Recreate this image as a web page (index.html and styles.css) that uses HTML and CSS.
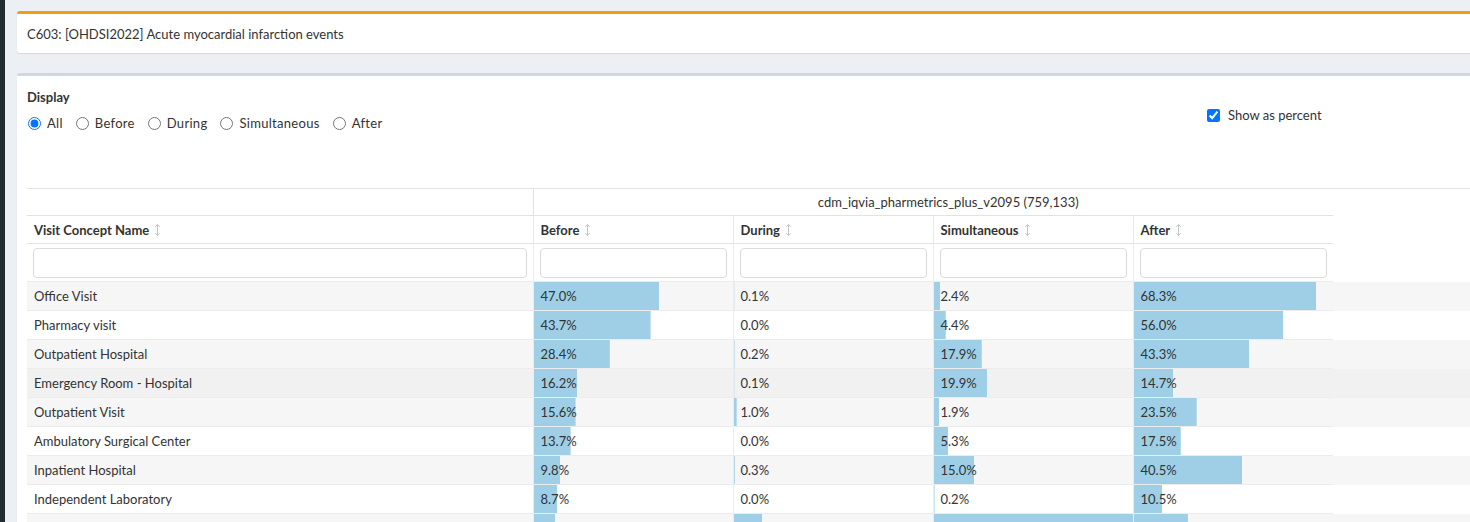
FILE: index.html
```html
<!DOCTYPE html>
<html lang="en">
<head>
<meta charset="utf-8">
<title>C603</title>
<link rel="stylesheet" href="styles.css">
</head>
<body>
<div class="layout">
  <aside class="sidebar"></aside>
  <main class="content">
    <section class="card card-title">C603: [OHDSI2022] Acute myocardial infarction events</section>
    <section class="card card-main">
      <div class="controls">
        <div class="display">
          <div class="label">Display</div>
          <div class="radios">
            <label class="opt"><input type="radio" name="display" checked><span>All</span></label>
            <label class="opt"><input type="radio" name="display"><span>Before</span></label>
            <label class="opt"><input type="radio" name="display"><span>During</span></label>
            <label class="opt"><input type="radio" name="display"><span>Simultaneous</span></label>
            <label class="opt"><input type="radio" name="display"><span>After</span></label>
          </div>
        </div>
        <div class="percent">
          <label class="opt"><input type="checkbox" checked><span>Show as percent</span></label>
        </div>
      </div>

      <table class="grid">
        <colgroup>
          <col class="c-name"><col class="c-val"><col class="c-val"><col class="c-val"><col class="c-val"><col class="c-fill">
        </colgroup>
        <thead>
          <tr class="h-group">
            <th></th>
            <th colspan="4" class="group">cdm_iqvia_pharmetrics_plus_v2095 (759,133)</th>
            <th class="fill"></th>
          </tr>
          <tr class="h-cols">
            <th>Visit Concept Name<svg class="sort" viewBox="0 0 7 14" width="7" height="14"><path d="M3.5 1.5V12.5M1.2 4L3.5 1.5L5.8 4M1.2 10L3.5 12.5L5.8 10"/></svg></th>
            <th>Before<svg class="sort" viewBox="0 0 7 14" width="7" height="14"><path d="M3.5 1.5V12.5M1.2 4L3.5 1.5L5.8 4M1.2 10L3.5 12.5L5.8 10"/></svg></th>
            <th>During<svg class="sort" viewBox="0 0 7 14" width="7" height="14"><path d="M3.5 1.5V12.5M1.2 4L3.5 1.5L5.8 4M1.2 10L3.5 12.5L5.8 10"/></svg></th>
            <th>Simultaneous<svg class="sort" viewBox="0 0 7 14" width="7" height="14"><path d="M3.5 1.5V12.5M1.2 4L3.5 1.5L5.8 4M1.2 10L3.5 12.5L5.8 10"/></svg></th>
            <th>After<svg class="sort" viewBox="0 0 7 14" width="7" height="14"><path d="M3.5 1.5V12.5M1.2 4L3.5 1.5L5.8 4M1.2 10L3.5 12.5L5.8 10"/></svg></th>
            <th class="fill"></th>
          </tr>
          <tr class="h-filter">
            <td><input type="text" class="filter"></td>
            <td><input type="text" class="filter"></td>
            <td><input type="text" class="filter"></td>
            <td><input type="text" class="filter"></td>
            <td><input type="text" class="filter"></td>
            <td class="fill"></td>
          </tr>
        </thead>
        <tbody>
          <tr class="odd"><td>Office Visit</td><td class="bar" style="--w:63.0%">47.0%</td><td class="bar" style="--w:0.13%">0.1%</td><td class="bar" style="--w:3.2%">2.4%</td><td class="bar" style="--w:91.6%">68.3%</td><td class="fill"></td></tr>
          <tr><td>Pharmacy visit</td><td class="bar" style="--w:58.6%">43.7%</td><td class="bar" style="--w:0%">0.0%</td><td class="bar" style="--w:5.9%">4.4%</td><td class="bar" style="--w:75.1%">56.0%</td><td class="fill"></td></tr>
          <tr class="odd"><td>Outpatient Hospital</td><td class="bar" style="--w:38.1%">28.4%</td><td class="bar" style="--w:0.27%">0.2%</td><td class="bar" style="--w:24.0%">17.9%</td><td class="bar" style="--w:58.0%">43.3%</td><td class="fill"></td></tr>
          <tr class="hover"><td>Emergency Room - Hospital</td><td class="bar" style="--w:21.7%">16.2%</td><td class="bar" style="--w:0.13%">0.1%</td><td class="bar" style="--w:26.7%">19.9%</td><td class="bar" style="--w:19.7%">14.7%</td><td class="fill"></td></tr>
          <tr class="odd"><td>Outpatient Visit</td><td class="bar" style="--w:20.9%">15.6%</td><td class="bar" style="--w:1.34%">1.0%</td><td class="bar" style="--w:2.5%">1.9%</td><td class="bar" style="--w:31.5%">23.5%</td><td class="fill"></td></tr>
          <tr><td>Ambulatory Surgical Center</td><td class="bar" style="--w:18.4%">13.7%</td><td class="bar" style="--w:0%">0.0%</td><td class="bar" style="--w:7.1%">5.3%</td><td class="bar" style="--w:23.5%">17.5%</td><td class="fill"></td></tr>
          <tr class="odd"><td>Inpatient Hospital</td><td class="bar" style="--w:13.1%">9.8%</td><td class="bar" style="--w:0.4%">0.3%</td><td class="bar" style="--w:20.1%">15.0%</td><td class="bar" style="--w:54.3%">40.5%</td><td class="fill"></td></tr>
          <tr><td>Independent Laboratory</td><td class="bar" style="--w:11.7%">8.7%</td><td class="bar" style="--w:0%">0.0%</td><td class="bar" style="--w:0.27%">0.2%</td><td class="bar" style="--w:14.1%">10.5%</td><td class="fill"></td></tr>
          <tr class="odd"><td></td><td class="bar" style="--w:10.6%"></td><td class="bar" style="--w:14.1%"></td><td class="bar" style="--w:100%"></td><td class="bar" style="--w:27.1%"></td><td class="fill"></td></tr>
        </tbody>
      </table>
    </section>
  </main>
</div>
</body>
</html>
```

FILE: styles.css
```css
html, body {
  margin: 0;
  padding: 0;
}

body {
  background: #ecf0f5;
  color: #333;
  font-family: "Lato", "Liberation Sans", sans-serif;
  font-size: 13px;
  overflow: hidden;
  height: 522px;
}

.layout {
  display: flex;
  min-height: 522px;
}

.sidebar {
  flex: none;
  width: 5px;
  background: #222d32;
}

.content {
  flex: none;
  width: 1500px;
  padding: 11px 0 0 12px;
}

.card {
  background: #fff;
  border-radius: 3px;
  box-shadow: 0 1px 1px rgba(0, 0, 0, 0.1);
}

.card-title {
  border-top: 3px solid #f39c12;
  display: flex;
  align-items: center;
  padding-left: 10px;
  box-sizing: border-box;
  height: 42px;
}

.card-main {
  margin-top: 20px;
  border-top: 3px solid #d2d6de;
  padding: 11px 10px 0 10px;
  min-height: 460px;
}

.controls {
  display: flex;
}

.display {
  width: 1179px;
  flex: none;
}

.label {
  font-weight: 700;
  line-height: 20px;
}

.radios {
  display: flex;
  margin-top: 7px;
  height: 18px;
  align-items: center;
  letter-spacing: 0.3px;
}

.opt {
  display: inline-flex;
  align-items: center;
  margin-right: 12px;
  line-height: 18px;
}

.opt input {
  margin: 0 6px 0 1px;
  width: 13px;
  height: 13px;
  accent-color: #0075ff;
}

.percent {
  padding-top: 19px;
}

.percent .opt input {
  margin-right: 8px;
}

.grid {
  margin-top: 56px;
  border-collapse: collapse;
  table-layout: fixed;
  width: 1460px;
  border-top: 1px solid #e2e2e2;
}

.c-name { width: 506px; }
.c-val { width: 200px; }

.grid th,
.grid td {
  padding: 0 6px 0 7px;
  text-align: left;
  white-space: nowrap;
  overflow: hidden;
}

.grid th {
  font-weight: 700;
}

.h-group th {
  height: 26px;
  border-bottom: 1px solid #e2e2e2;
}

.h-group th.group {
  text-align: center;
  font-weight: 400;
  padding-left: 36px;
  border-left: 1px solid #e2e2e2;
}

.h-cols th {
  height: 27px;
  border-bottom: 1px solid #e2e2e2;
}

.h-cols th + th {
  border-left: 1px solid #e8e8e8;
}

.sort {
  margin-left: 5px;
  vertical-align: -2px;
  fill: none;
  stroke: #c4c4c4;
  stroke-width: 1;
}

.h-filter td {
  height: 37px;
  padding: 0 6px;
  border-bottom: 1px solid #ececec;
}

.h-filter td + td {
  border-left: 1px solid #ececec;
}

.filter {
  display: block;
  box-sizing: border-box;
  width: 100%;
  height: 30px;
  border: 1px solid #dcdcdc;
  border-radius: 4px;
  background: #fff;
  margin: 0;
}

.grid th.fill,
.grid td.fill {
  border-left: none;
  border-bottom: none;
}

tbody tr td {
  height: 28px;
  border-bottom: 1px solid #ececec;
}

tbody tr td + td {
  border-left: 1px solid #ececec;
}

tbody tr.odd {
  background: #f6f6f6;
}

tbody tr.hover {
  background: #f1f1f1;
}

.bar {
  background-image: linear-gradient(#9ecfe6, #9ecfe6);
  background-repeat: no-repeat;
  background-size: var(--w) 100%;
}
```
